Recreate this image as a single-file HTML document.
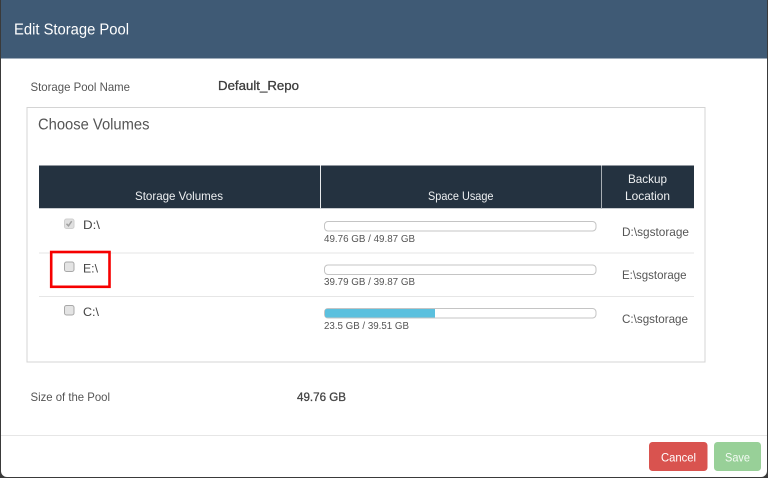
<!DOCTYPE html>
<html>
<head>
<meta charset="utf-8">
<style>
html,body{margin:0;padding:0;background:#3a3a3a;width:768px;height:478px;overflow:hidden}
svg{display:block;position:absolute;left:0;top:0;filter:blur(0.3px)}
text{font-family:"Liberation Sans",sans-serif}
.m{stroke-width:0.3px;paint-order:stroke}
</style>
</head>
<body>
<svg width="768" height="478" viewBox="0 0 768 478" xmlns="http://www.w3.org/2000/svg">
<rect x="0" y="0" width="768" height="478" fill="#3a3a3a"/>
<path d="M1 0H767V471a6 6 0 0 1-6 6H7a6 6 0 0 1-6-6Z" fill="#fff"/>
<rect x="1" y="0" width="766" height="58.5" fill="#3f5a75"/>
<text x="14" y="34.5" font-size="15.5" fill="#fff" textLength="115" lengthAdjust="spacingAndGlyphs">Edit Storage Pool</text>

<text x="30.5" y="91" font-size="12" fill="#555" textLength="99.5" lengthAdjust="spacingAndGlyphs">Storage Pool Name</text>
<text class="m" x="218" y="90" font-size="13" fill="#3c3c3c" stroke="#3c3c3c" textLength="81" lengthAdjust="spacingAndGlyphs">Default_Repo</text>

<rect x="27" y="107.5" width="678" height="254.5" fill="#fff" stroke="#d4d4d4" stroke-width="1"/>
<text x="38" y="129.5" font-size="15.5" fill="#555" textLength="111.5" lengthAdjust="spacingAndGlyphs">Choose Volumes</text>

<rect x="39" y="165.5" width="655" height="43" fill="#243240"/>
<rect x="39" y="208" width="655" height="1" fill="#c8ccd0"/>
<rect x="320" y="165.5" width="1" height="43" fill="#e8eaec"/>
<rect x="601" y="165.5" width="1" height="43" fill="#a8aeb4"/>
<text x="135" y="200" font-size="12" fill="#eef0f2" textLength="88" lengthAdjust="spacingAndGlyphs">Storage Volumes</text>
<text x="428" y="200" font-size="12" fill="#eef0f2" textLength="65.5" lengthAdjust="spacingAndGlyphs">Space Usage</text>
<text x="628" y="183" font-size="12" fill="#eef0f2" textLength="39" lengthAdjust="spacingAndGlyphs">Backup</text>
<text x="625" y="200" font-size="12" fill="#eef0f2" textLength="45" lengthAdjust="spacingAndGlyphs">Location</text>

<rect x="39" y="252.5" width="655" height="1" fill="#e6e6e6"/>
<rect x="39" y="296" width="655" height="1" fill="#e6e6e6"/>

<!-- checkboxes -->
<rect x="64.5" y="219" width="9.5" height="9.5" rx="2" fill="#e0e0e0" stroke="#cfcfcf"/>
<path d="M66.5 223.8l2 2 3.2-4.6" fill="none" stroke="#a0a0a0" stroke-width="1.5"/>
<rect x="64.5" y="262" width="9.5" height="9.5" rx="2" fill="#e4e4e4" stroke="#a8a8a8"/>
<rect x="64.5" y="305.5" width="9.5" height="9.5" rx="2" fill="#e4e4e4" stroke="#a8a8a8"/>

<text x="83" y="229" font-size="12" fill="#444" textLength="17" lengthAdjust="spacingAndGlyphs">D:\</text>
<text x="83" y="272.5" font-size="12" fill="#444" textLength="15" lengthAdjust="spacingAndGlyphs">E:\</text>
<text x="83" y="316" font-size="12" fill="#444" textLength="16" lengthAdjust="spacingAndGlyphs">C:\</text>

<rect x="51.2" y="252" width="58.3" height="34.8" fill="none" stroke="#f60000" stroke-width="2.6"/>

<!-- progress -->
<rect x="324.5" y="221.5" width="271.5" height="9.5" rx="3.5" fill="#fff" stroke="#c4c4c4"/>
<rect x="324.5" y="265" width="271.5" height="9.5" rx="3.5" fill="#fff" stroke="#c4c4c4"/>
<rect x="324.5" y="308.5" width="271.5" height="9.5" rx="3.5" fill="#fff" stroke="#c4c4c4"/>
<path d="M327 309H435V317.5H327a2 2 0 0 1-2-2V311a2 2 0 0 1 2-2Z" fill="#5bc0de"/>

<text x="324" y="242" font-size="10" fill="#555" textLength="91" lengthAdjust="spacingAndGlyphs">49.76 GB / 49.87 GB</text>
<text x="324" y="285" font-size="10" fill="#555" textLength="91" lengthAdjust="spacingAndGlyphs">39.79 GB / 39.87 GB</text>
<text x="324" y="329" font-size="10" fill="#555" textLength="85" lengthAdjust="spacingAndGlyphs">23.5 GB / 39.51 GB</text>

<text x="622" y="236" font-size="12" fill="#555" textLength="67" lengthAdjust="spacingAndGlyphs">D:\sgstorage</text>
<text x="622" y="279" font-size="12" fill="#555" textLength="64.5" lengthAdjust="spacingAndGlyphs">E:\sgstorage</text>
<text x="622" y="323" font-size="12" fill="#555" textLength="66" lengthAdjust="spacingAndGlyphs">C:\sgstorage</text>

<text x="30.5" y="401" font-size="12" fill="#555" textLength="79.5" lengthAdjust="spacingAndGlyphs">Size of the Pool</text>
<text class="m" x="297" y="401" font-size="12" fill="#444" stroke="#444" textLength="49" lengthAdjust="spacingAndGlyphs">49.76 GB</text>

<rect x="1" y="435" width="766" height="1" fill="#e6e6e6"/>

<rect x="649" y="442" width="58.5" height="29" rx="3.5" fill="#d9534f"/>
<text x="661" y="461.5" font-size="12" fill="#fff" textLength="35" lengthAdjust="spacingAndGlyphs">Cancel</text>
<rect x="714" y="442" width="47" height="29" rx="3.5" fill="#98d098"/>
<text x="725" y="461.5" font-size="12" fill="#f4fbf4" textLength="25" lengthAdjust="spacingAndGlyphs">Save</text>
</svg>
</body>
</html>
